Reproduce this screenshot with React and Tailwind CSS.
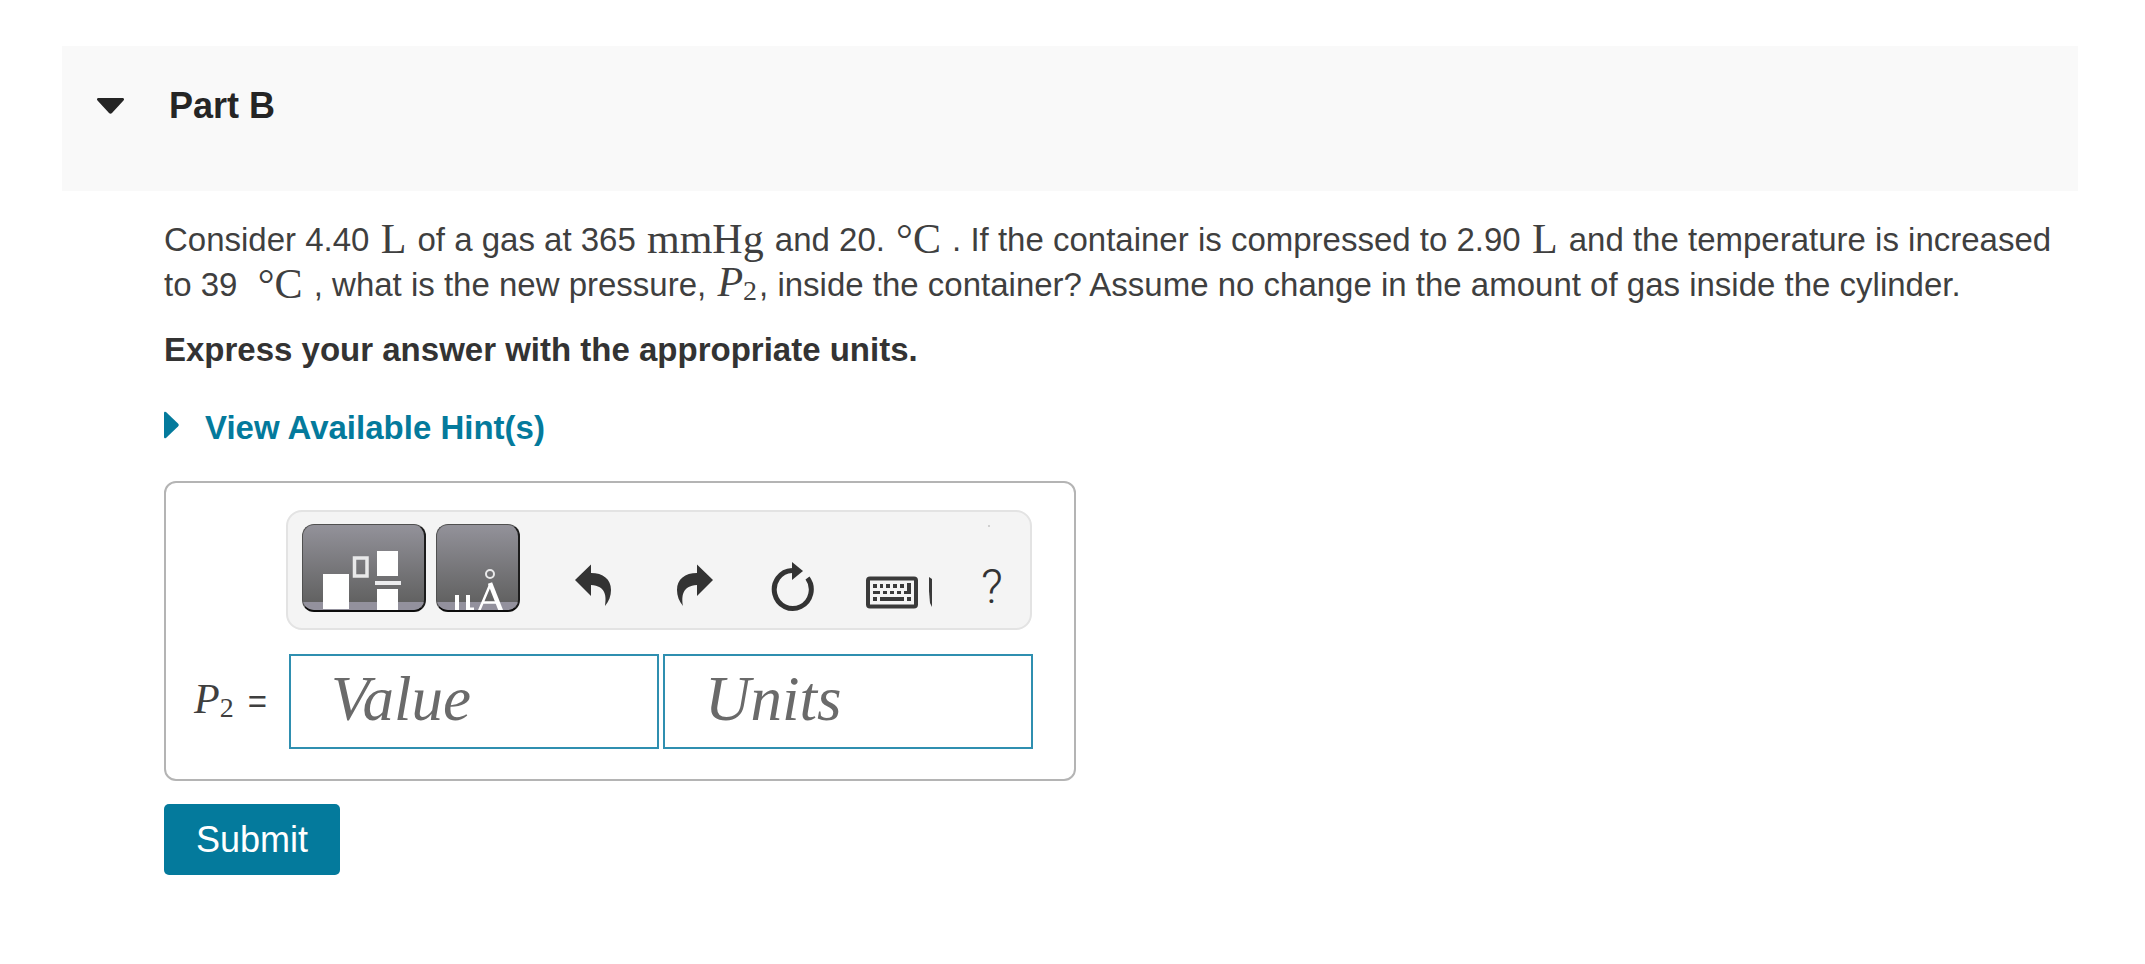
import { useState } from 'react';

const Unit = ({ children }) => (
  <span className="mx-[2px] align-[-2px] font-['Liberation_Serif',serif] text-[42px] leading-9">{children}</span>
);

const PressureSymbol = () => (
  <span className="mx-[2px] font-['Liberation_Serif',serif] text-[42px] leading-9 whitespace-nowrap">
    <i>P</i>
    <sub className="text-[28px] leading-none bottom-[-4px]">2</sub>
  </span>
);

const TemplatesIcon = () => (
  <svg className="block w-full h-full" viewBox="0 0 121 85" preserveAspectRatio="none" aria-hidden="true">
    <rect y="77" width="121" height="8" fill="#93919d" />
    <rect x="20" y="49" width="26" height="35" fill="#fff" />
    <rect x="51.500" y="33" width="12.500" height="18" fill="none" stroke="#e9e9ea" strokeWidth="3.500" />
    <rect x="74" y="26" width="21" height="25" fill="#fff" />
    <rect x="72" y="56" width="26" height="4" fill="#ececee" />
    <rect x="74" y="64" width="21" height="21" fill="#fff" />
  </svg>
);

const SymbolsIcon = () => (
  <svg className="block w-full h-full" viewBox="0 0 81 85" preserveAspectRatio="none" aria-hidden="true">
    <rect y="77" width="81" height="8" fill="#93919d" />
    <path d="M20 70V85M31 70V85" stroke="#fff" strokeWidth="4" />
    <path d="M33 84H37" stroke="#fff" strokeWidth="3" />
    <circle cx="53" cy="49" r="4" fill="none" stroke="#e9e9ea" strokeWidth="2" />
    <path d="M42 86L53 60M45 77.500H61" fill="none" stroke="#fff" strokeWidth="2.500" />
    <path d="M53 58L64 86" fill="none" stroke="#fff" strokeWidth="4.500" />
  </svg>
);

const UndoIcon = () => (
  <svg width="36" height="50" viewBox="0 0 36 50" fill="#333" aria-hidden="true">
    <path d="M0 18L16 2.500V11C28 11 36 17 36 28C36 34 34 39 30 44C31.500 34 31 24 16 23V34Z" />
  </svg>
);

const RedoIcon = () => (
  <svg width="36" height="50" viewBox="0 0 36 50" fill="#333" aria-hidden="true">
    <path d="M36 18L20 2.500V11C8 11 0 17 0 28C0 34 2 39 6 44C4.500 34 5 24 20 23V34Z" />
  </svg>
);

const ResetIcon = () => (
  <svg width="44" height="50" viewBox="0 0 44 50" fill="none" aria-hidden="true">
    <path d="M21 8.500A18.500 19 0 1 0 36.500 16" stroke="#333" strokeWidth="5" />
    <path d="M21 0L32 9L21 18Z" fill="#333" />
  </svg>
);

const KeyboardIcon = () => (
  <svg width="68" height="50" viewBox="0 0 68 50" fill="none" aria-hidden="true">
    <rect x="2" y="16.500" width="48" height="28" rx="2" stroke="#3a3a3a" strokeWidth="4" />
    <g fill="#3a3a3a">
      <path d="M7 22h4v4h-4zM14 22h3v4h-3zM20 22h4v4h-4zM27 22h4v4h-4zM34 22h4v4h-4z" />
      <path d="M7 29h7v3h-7zM17 29h4v3h-4zM24 29h4v3h-4zM31 29h4v3h-4z" />
      <path d="M41 21h4v11h-7v-3h3z" />
      <path d="M7 35h4v4h-4zM14 35h24v4h-24zM41 35h4v4h-4z" />
      <path d="M63 15L66 17V45L64 41Q62.500 29 63 15Z" />
    </g>
  </svg>
);

const toolTile =
  'h-[88px] shrink-0 overflow-hidden rounded-[12px] border border-r-2 border-b-2 border-[#505050] border-r-[#1c1c1c] border-b-[#0c0c0c] bg-linear-to-b from-[#93929a] to-[#626262] to-90%';

const answerField =
  "w-[370px] h-[95px] border-2 border-[#2f8fb0] bg-white pl-10 pb-1 font-['Liberation_Serif',serif] text-[63px] italic text-[#333] placeholder:text-[#6a6a6a] outline-none";

export default function App() {
  const [open, setOpen] = useState(true);
  const [value, setValue] = useState('');
  const [units, setUnits] = useState('');

  return (
    <main className="bg-white pt-[46px] pb-[88px] pl-[62px] pr-[67px] font-['Liberation_Sans',Arial,sans-serif] text-[33px] leading-[45px] text-[#3f3f3f]">
      <h2 className="h-[145px] bg-[#f9f9f9] pt-[38px] pl-[35px] text-[36px] leading-[44px] font-bold text-[#252525]">
        <button type="button" aria-expanded={open} onClick={() => setOpen(!open)} className="flex items-center gap-[45px]">
          <svg width="27" height="16" viewBox="0 0 27 16" fill="#252525" aria-hidden="true">
            <path d="M1 0H26Q28 1 26.500 2.500L15 15Q13.500 16.500 12 15L0.500 2.500Q-1 1 1 0Z" />
          </svg>
          Part B
        </button>
      </h2>

      {open && (
        <section className="pl-[102px] pt-[26px]">
          <p>
            Consider 4.40 <Unit>L</Unit> of a gas at 365 <Unit>mmHg</Unit> and 20. <Unit>°C</Unit> . If the container
            is compressed to 2.90 <Unit>L</Unit> and the temperature is increased to 39 &nbsp;<Unit>°C</Unit> , what is
            the new pressure, <PressureSymbol />, inside the container? Assume no change in the amount of gas inside
            the cylinder.
          </p>
          <p className="mt-5 font-bold text-[#333]">Express your answer with the appropriate units.</p>

          <button type="button" className="mt-[33px] flex items-start gap-[26px] font-bold text-[#047a9c]">
            <svg className="mt-[6px]" width="15" height="28" viewBox="0 0 15 28" fill="#047a9c" aria-hidden="true">
              <path d="M0 2Q0 0 2 1L14 12.500Q15.500 14 14 15.500L2 27Q0 28 0 26Z" />
            </svg>
            View Available Hint(s)
          </button>

          <form onSubmit={(e) => e.preventDefault()}>
            <div className="mt-[31px] w-fit rounded-[12px] border-2 border-[#b4b4b4] pt-[27px] pr-[41px] pb-[30px] pl-[26px]">
              <div className="relative ml-[94px] flex h-[120px] w-[746px] rounded-[16px] border-2 border-[#e3e3e3] bg-[#f4f4f4] pt-3 pl-[14px]">
                <button type="button" aria-label="Templates" className={`${toolTile} w-[124px] mr-[10px]`}>
                  <TemplatesIcon />
                </button>
                <button type="button" aria-label="Symbols" className={`${toolTile} w-[84px] mr-[22px]`}>
                  <SymbolsIcon />
                </button>
                <div className="flex items-end pb-4">
                  <button type="button" aria-label="Undo" className="flex w-[102px] justify-center"><UndoIcon /></button>
                  <button type="button" aria-label="Redo" className="flex w-[102px] justify-center"><RedoIcon /></button>
                  <button type="button" aria-label="Reset" className="flex w-[94px] justify-center"><ResetIcon /></button>
                  <button type="button" aria-label="Keyboard shortcuts" className="flex w-[120px] justify-center"><KeyboardIcon /></button>
                  <button type="button" aria-label="Help" className="w-[64px] text-center font-[Roboto,sans-serif] text-[48px] leading-[50px] font-light text-[#333]">?</button>
                </div>
                <span className="absolute top-[13px] right-[40px] size-[2px] rounded-full bg-[#c4c4c4]" />
              </div>

              <div className="mt-6 flex items-center">
                <label htmlFor="value" className="flex w-[97px] items-baseline gap-3 whitespace-nowrap">
                  <PressureSymbol />
                  <span>=</span>
                </label>
                <div className="flex gap-1">
                  <input id="value" type="text" placeholder="Value" value={value} onChange={(e) => setValue(e.target.value)} className={answerField} />
                  <input aria-label="Units" type="text" placeholder="Units" value={units} onChange={(e) => setUnits(e.target.value)} className={answerField} />
                </div>
              </div>
            </div>

            <button type="submit" className="mt-[23px] h-[71px] rounded-[5px] bg-[#047a9c] px-8 text-[36px] leading-[42px] text-white">
              Submit
            </button>
          </form>
        </section>
      )}
    </main>
  );
}
